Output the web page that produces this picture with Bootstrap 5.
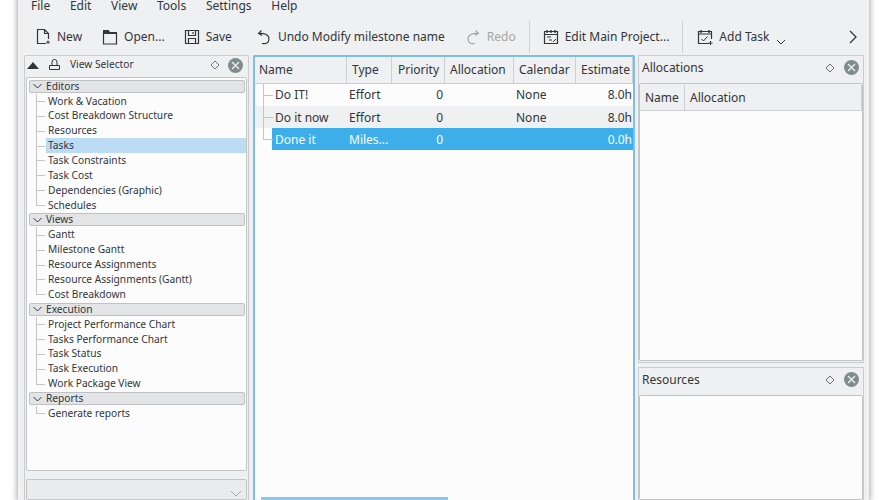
<!DOCTYPE html>
<html lang="en"><head><meta charset="utf-8"><title>Plan</title>
<link href="https://cdn.jsdelivr.net/npm/bootstrap@5.3.0/dist/css/bootstrap.min.css" rel="stylesheet">
<style>
html,body{height:500px;overflow:hidden;background:#fff}
body{font-family:"Noto Sans",sans-serif;font-size:12px;color:#31363b}
.app-win{width:851px;height:508px;margin:-8px 0 0 18px;background:#eff0f1;box-shadow:0 0 6px 1px rgba(0,0,0,.35);overflow:hidden}
.menu-row{height:28px;padding:0 13px;gap:19.7px;align-items:center;flex:none}
.tool-row{height:35px;padding:0 0 2px 7px;flex:none;align-items:center}
.tool-btn{display:flex;align-items:center;gap:6px;padding:0 10px;white-space:nowrap;height:30px}
.tool-btn svg{flex:none}
.tool-off{color:#a4a6a8}
.tool-open{padding-right:9px}
.tool-undo{margin-left:4px}
.tool-sep{width:1px;height:32px;background:#cfd1d3;margin:0 3px}
.tool-sep2{margin-right:4px}
.work-area{flex:1;min-height:0;padding:0 5px 0 6px;gap:4px}
.left-dock{width:225px;flex:none;border:1px solid #c9cbcd;border-bottom:0;padding:0 1px;border-radius:2px 2px 0 0}
.dock-head{height:21px;flex:none;align-items:center;font-size:10.2px;padding:0 0 3px 1px}
.head-gap{margin-right:10px}
.dock-head2{height:27px;flex:none;align-items:center;padding:0 0 4px 3px}
.tree-box{height:394px;flex:none;background:#fcfcfc;border:1px solid #c2c4c6;border-radius:2px;font-size:10.2px;padding:.6px 0 0 2px;line-height:14.86px}
.combo-box{margin-top:8px;flex:1;border:1px solid #c2c4c6;border-radius:2px;background:#eaebec;position:relative}
.combo-box svg{position:absolute;right:4px;top:10px}
.grp-head{height:13px;margin:1px 1px 1px 0;padding-left:3px;display:flex;align-items:center;gap:4px;border:1px solid #bfc1c3;border-radius:2px;background:#e3e4e6;line-height:11px}
.tree-item{height:14.86px;margin-left:17px;padding-left:2px;position:relative;white-space:nowrap}
.tree-item::before{content:"";position:absolute;left:-10px;top:0;bottom:0;border-left:1px solid #c3c5c7}
.tree-item::after{content:"";position:absolute;left:-10px;top:50%;width:9px;border-top:1px solid #c3c5c7}
.tree-end::before{bottom:50%}
.tree-sel{background:#bcdcf3}
.mid-pane{width:382px;flex:none;border:2px solid #7ebfe9;border-bottom:0;border-radius:2px 2px 0 0;background:#fcfcfc;position:relative;overflow:hidden}
.right-col{flex:1;min-width:0;margin-left:-1px}
.side-dock{border:1px solid #c9cbcd}
.dock-a{height:308px;flex:none;margin-bottom:4px;padding-bottom:1px}
.dock-b{flex:1;border-bottom:0}
.side-body{flex:1;background:#fcfcfc;border:1px solid #c2c4c6;border-radius:2px}
.head-cells{display:flex;height:27px;background:#eff0f1;border-bottom:1px solid #cdcfd1;flex:none}
.head-cell{border-right:1px solid #cdcfd1;padding-left:5px;display:flex;align-items:center;flex:none}
.head-first{padding-left:4px}
.head-pri{padding-left:6px}
.head-low{padding-top:1px}
.task-row{display:flex;height:22px;align-items:center;position:relative}
.task-alt{background:#eff0f1;padding-top:1px}
.task-cell{flex:none;white-space:nowrap}
.task-on{background:#3daee9;color:#fcfcfc;margin-left:17px;padding-top:1px}
.task-line{position:absolute;left:8px;top:0;height:100%;width:10px}
.task-line::before{content:"";position:absolute;left:0;top:0;bottom:0;border-left:1px solid #c3c5c7}
.task-line::after{content:"";position:absolute;left:0;top:50%;width:10px;border-top:1px solid #c3c5c7}
.line-end::before{bottom:50%}
.w-a{width:92px}.w-b{width:45px}.w-c{width:53px}.w-d{width:69px}.w-e{width:62px}.w-f{width:57px}
.w-a1{width:94px}
.w-a2{width:77px}
.cell-name{padding-left:20px}
.cell-first{padding-left:3px}
.cell-r{text-align:right;padding-right:4px}
.cell-last{padding-right:3px}
.scroll-thumb{position:absolute;left:6px;bottom:0;width:187px;height:3px;background:#8ac8ec}
.dock-ctl{margin-left:auto;gap:9px;align-items:center;padding-right:4px}
.left-ctl{gap:8px;padding-right:4px}
.next-arrow{margin:0 11px 0 auto}
.chev-low{margin-top:10px}
.col-short{width:45px}
</style></head><body>
<div class="app-win d-flex flex-column">
 <div class="menu-row d-flex"><span>File</span><span>Edit</span><span>View</span><span>Tools</span><span>Settings</span><span>Help</span></div>
 <div class="tool-row d-flex">
  <div class="tool-btn"><svg width="16" height="17" viewBox="0 0 16 17" fill="none" stroke="#31363b" stroke-width="1.2"><path d="M11 15.500H2.500V1.500H9.500L13.500 5.500V11M9.500 1.500V5.500H13.500"/><path d="M13 12.500v3.500M11.200 14.200h3.600" stroke-width="1"/></svg><span>New</span></div>
  <div class="tool-btn tool-open"><svg width="16" height="16" viewBox="0 0 16 16"><path d="M1 1h5.500l1.500 2h7v2H1z" fill="#31363b"/><path d="M1.500 4v11h13V4" fill="none" stroke="#31363b" stroke-width="1.2"/></svg><span>Open...</span></div>
  <div class="tool-btn"><svg width="16" height="16" viewBox="0 0 16 16" fill="none" stroke="#31363b" stroke-width="1.2"><path d="M1.500 1.500h13v13h-13zM4.500 1.500v5h7v-5M4.500 14.500v-5h7v5M9 3v2"/></svg><span>Save</span></div>
  <div class="tool-btn tool-undo"><svg width="16" height="16" viewBox="0 0 16 16" fill="none" stroke="#31363b" stroke-width="1.1"><path d="M5.500 1.500L2.500 4.500 6 6.500M2.500 4.500C9 4 13 6 13 10s-3 5-7 4.500"/></svg><span>Undo Modify milestone name</span></div>
  <div class="tool-btn tool-off"><svg width="16" height="16" viewBox="0 0 16 16" fill="none" stroke="#a4a6a8" stroke-width="1.1"><path d="M10.500 1.500l3 3L10 6.500M13.500 4.500C7 4 3 6 3 10s3 5 7 4.500"/></svg><span>Redo</span></div>
  <div class="tool-sep"></div>
  <div class="tool-btn"><svg width="16" height="16" viewBox="0 0 16 16" fill="none" stroke="#31363b" stroke-width="1.2"><path d="M1.500 2.500h13v12h-13zM1.500 5.500h13"/><path d="M4 1v3M8 1v3M12 1v3" stroke-width="1.4"/><path d="M4 8h4M6 11h3M10 13l3-3" stroke-width="1"/></svg><span>Edit Main Project...</span></div>
  <div class="tool-sep tool-sep2"></div>
  <div class="tool-btn"><svg width="16" height="16" viewBox="0 0 16 16" fill="none" stroke="#31363b" stroke-width="1.2"><path d="M12 14.500H1.500v-12h13V10M1.500 5h13"/><path d="M4 1v3M12 1v3" stroke-width="1.4"/><path d="M4.500 10l2 2 4-4.500" stroke-width="1"/><path d="M13.500 12v4M11.500 14h4" stroke-width="1"/></svg><span>Add Task</span><svg class="chev-low" width="10" height="6" viewBox="0 0 10 6" fill="none" stroke="#31363b"><path d="M1 1l4 4 4-4"/></svg></div>
  <div class="next-arrow"><svg width="10" height="14" viewBox="0 0 10 14" fill="none" stroke="#31363b" stroke-width="1.3"><path d="M2 1l6 6-6 6"/></svg></div>
 </div>
 <div class="work-area d-flex">
  <div class="left-dock d-flex flex-column">
   <div class="dock-head d-flex"><svg class="head-gap" width="12" height="7" viewBox="0 0 12 7"><path d="M0 7L6 0l6 7z" fill="#31363b"/></svg><svg class="head-gap" width="11" height="12" viewBox="0 0 11 12" fill="none" stroke="#31363b"><path d="M.5 6.500h10v4H.5zM3 6.500V3a2.500 2.500 0 0 1 5 0v3.500"/></svg><span>View Selector</span>
    <div class="dock-ctl left-ctl d-flex"><svg width="10" height="10" viewBox="0 0 10 10" fill="none" stroke="#6e7173"><path d="M5 1l4 4-4 4-4-4z"/></svg><svg width="15" height="15" viewBox="0 0 15 15"><circle cx="7.500" cy="7.500" r="7.500" fill="#7f8c8d"/><path d="M4 4l7 7M11 4l-7 7" stroke="#eff0f1" stroke-width="1.400"/></svg></div></div>
   <div class="tree-box">
    <div class="grp-head"><svg width="9" height="6" viewBox="0 0 9 6" fill="none" stroke="#31363b"><path d="M.5 1l4 4 4-4"/></svg><span>Editors</span></div>
    <div class="tree-item">Work &amp; Vacation</div><div class="tree-item">Cost Breakdown Structure</div><div class="tree-item">Resources</div><div class="tree-item tree-sel">Tasks</div><div class="tree-item">Task Constraints</div><div class="tree-item">Task Cost</div><div class="tree-item">Dependencies (Graphic)</div><div class="tree-item tree-end">Schedules</div>
    <div class="grp-head"><svg width="9" height="6" viewBox="0 0 9 6" fill="none" stroke="#31363b"><path d="M.5 1l4 4 4-4"/></svg><span>Views</span></div>
    <div class="tree-item">Gantt</div><div class="tree-item">Milestone Gantt</div><div class="tree-item">Resource Assignments</div><div class="tree-item">Resource Assignments (Gantt)</div><div class="tree-item tree-end">Cost Breakdown</div>
    <div class="grp-head"><svg width="9" height="6" viewBox="0 0 9 6" fill="none" stroke="#31363b"><path d="M.5 1l4 4 4-4"/></svg><span>Execution</span></div>
    <div class="tree-item">Project Performance Chart</div><div class="tree-item">Tasks Performance Chart</div><div class="tree-item">Task Status</div><div class="tree-item">Task Execution</div><div class="tree-item tree-end">Work Package View</div>
    <div class="grp-head"><svg width="9" height="6" viewBox="0 0 9 6" fill="none" stroke="#31363b"><path d="M.5 1l4 4 4-4"/></svg><span>Reports</span></div>
    <div class="tree-item tree-end">Generate reports</div>
   </div>
   <div class="combo-box"><svg width="12" height="7" viewBox="0 0 12 7" fill="none" stroke="#a9abad"><path d="M1 1l5 5 5-5"/></svg></div>
  </div>
  <div class="mid-pane d-flex flex-column">
   <div class="head-cells"><div class="head-cell w-a head-first">Name</div><div class="head-cell w-b">Type</div><div class="head-cell w-c head-pri">Priority</div><div class="head-cell w-d">Allocation</div><div class="head-cell w-e">Calendar</div><div class="head-cell w-f">Estimate</div></div>
   <div class="task-row"><i class="task-line"></i><div class="task-cell w-a1 cell-name">Do IT!</div><div class="task-cell w-b">Effort</div><div class="task-cell w-c cell-r">0</div><div class="task-cell w-d"></div><div class="task-cell w-e">None</div><div class="task-cell w-f cell-r cell-last">8.0h</div></div>
   <div class="task-row task-alt"><i class="task-line"></i><div class="task-cell w-a1 cell-name">Do it now</div><div class="task-cell w-b">Effort</div><div class="task-cell w-c cell-r">0</div><div class="task-cell w-d"></div><div class="task-cell w-e">None</div><div class="task-cell w-f cell-r cell-last">8.0h</div></div>
   <div class="task-row"><i class="task-line line-end"></i><div class="d-flex task-on h-100 align-items-center flex-grow-1"><div class="task-cell w-a2 cell-first">Done it</div><div class="task-cell w-b">Miles...</div><div class="task-cell w-c cell-r">0</div><div class="task-cell w-d"></div><div class="task-cell w-e"></div><div class="task-cell w-f cell-r cell-last">0.0h</div></div></div>
   <div class="scroll-thumb"></div>
  </div>
  <div class="right-col d-flex flex-column">
   <div class="side-dock dock-a d-flex flex-column">
    <div class="dock-head2 d-flex"><span>Allocations</span><div class="dock-ctl d-flex"><svg width="10" height="10" viewBox="0 0 10 10" fill="none" stroke="#6e7173"><path d="M5 1l4 4-4 4-4-4z"/></svg><svg width="15" height="15" viewBox="0 0 15 15"><circle cx="7.500" cy="7.500" r="7.500" fill="#7f8c8d"/><path d="M4 4l7 7M11 4l-7 7" stroke="#eff0f1" stroke-width="1.400"/></svg></div></div>
    <div class="side-body d-flex flex-column"><div class="head-cells head-low"><div class="head-cell col-short">Name</div><div class="head-cell flex-grow-1">Allocation</div></div></div>
   </div>
   <div class="side-dock dock-b d-flex flex-column">
    <div class="dock-head2 d-flex"><span>Resources</span><div class="dock-ctl d-flex"><svg width="10" height="10" viewBox="0 0 10 10" fill="none" stroke="#6e7173"><path d="M5 1l4 4-4 4-4-4z"/></svg><svg width="15" height="15" viewBox="0 0 15 15"><circle cx="7.500" cy="7.500" r="7.500" fill="#7f8c8d"/><path d="M4 4l7 7M11 4l-7 7" stroke="#eff0f1" stroke-width="1.400"/></svg></div></div>
    <div class="side-body"></div>
   </div>
  </div>
 </div>
</div>
<script src="https://cdn.jsdelivr.net/npm/bootstrap@5.3.0/dist/js/bootstrap.bundle.min.js"></script>
</body></html>
